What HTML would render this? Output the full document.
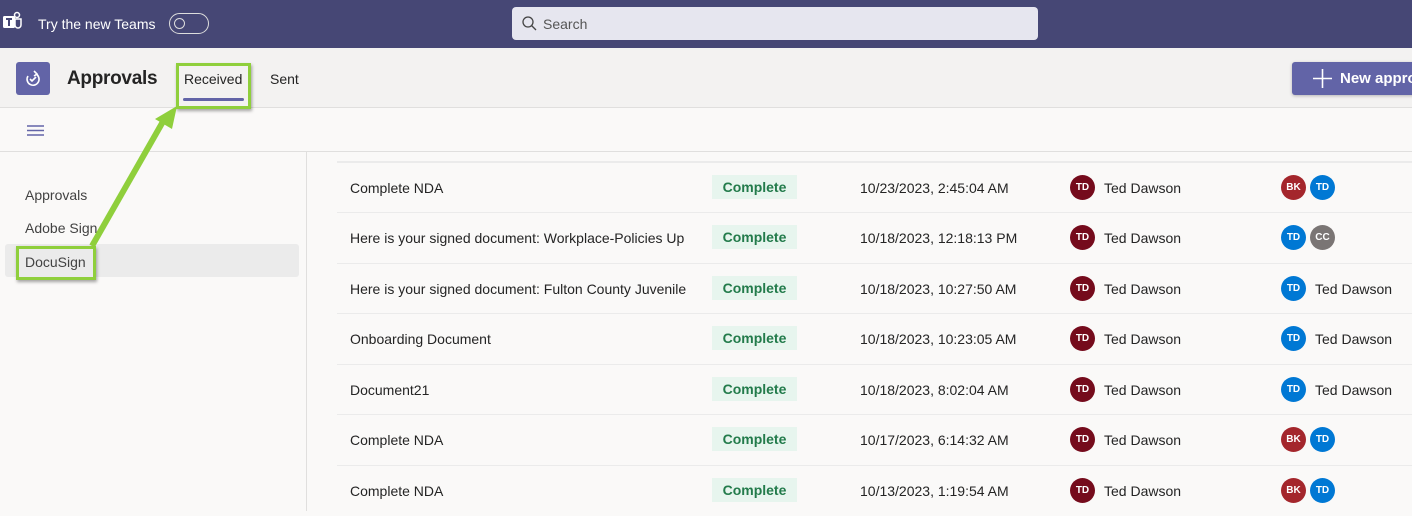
<!DOCTYPE html>
<html><head><meta charset="utf-8"><style>
*{margin:0;padding:0;box-sizing:border-box}
body{width:1412px;height:511px;overflow:hidden;background:#faf9f8;font-family:"Liberation Sans",sans-serif;color:#242424;position:relative}
.top{position:absolute;left:0;top:0;width:1412px;height:48px;background:#464775}
.top .t{position:absolute;left:38px;top:16px;color:#fff;font-size:14px}
.tog{position:absolute;left:169px;top:13px;width:40px;height:21px;border:1.5px solid #ddd;border-radius:11px}
.tog i{position:absolute;left:4px;top:3.5px;width:11px;height:11px;border:1.5px solid #ddd;border-radius:50%}
.search{position:absolute;left:512px;top:7px;width:526px;height:33px;background:#e6e6ef;border-radius:4px;color:#555;font-size:14px;padding:9px 0 0 31px}
.hdr{position:absolute;left:0;top:48px;width:1412px;height:60px;background:#f3f2f1;border-bottom:1px solid #e0dfde}
.appic{position:absolute;left:16px;top:62px;width:34px;height:33px;background:#6264a7;border-radius:3px}
.title{position:absolute;left:67px;top:68px;font-size:19px;font-weight:bold;letter-spacing:-0.3px}
.tab{position:absolute;top:71px;font-size:14px}
.ul{position:absolute;left:183px;top:98px;width:61px;height:3px;background:#6264a7;border-radius:2px}
.btn{position:absolute;left:1292px;top:62px;width:130px;height:33px;background:#6264a7;border-radius:3px;color:#fff;font-weight:bold;font-size:15px;padding:8px 0 0 48px;box-shadow:0 1px 3px rgba(0,0,0,.25);white-space:nowrap;overflow:hidden}
.tool{position:absolute;left:0;top:108px;width:1412px;height:44px;border-bottom:1px solid #e0dfde}
.side{position:absolute;left:0;top:152px;width:307px;height:359px;border-right:1px solid #e0dfde}
.si{position:absolute;left:25px;font-size:14px;color:#424242}
.sel{position:absolute;left:5px;top:244px;width:294px;height:33px;background:#ebebeb;border-radius:3px}
.row{position:absolute;left:337px;width:1075px;height:51px;border-top:1px solid #ebebeb;font-size:14px}
.row span{position:absolute;top:17px;white-space:nowrap}
.badge{position:absolute;left:375px;top:12px;width:85px;height:24px;background:#e7f5ee;color:#237b4b;font-weight:bold;text-align:center;font-size:14px;line-height:24px}
.av{position:absolute;top:12px;width:25px;height:25px;border-radius:50%;color:#fff;font-size:10px;font-weight:bold;text-align:center;line-height:25px}
.gb{position:absolute;border:3px solid #8fcf3c;box-shadow:1px 2px 3px rgba(0,0,0,.35)}
</style></head><body>
<div class="top">
<svg style="position:absolute;left:2px;top:11px" width="22" height="22" viewBox="0 0 22 22"><circle cx="15" cy="4" r="2.5" fill="none" stroke="#fff" stroke-width="1.5"/><path d="M13 8h6v6a3 3 0 0 1-6 0z" fill="none" stroke="#fff" stroke-width="1.5"/><rect x="1" y="5" width="12" height="12" rx="1.5" fill="#fff"/><path d="M4 8h6M7 8v7" stroke="#464775" stroke-width="2"/></svg>
<div class="t">Try the new Teams</div>
<div class="tog"><i></i></div>
<div class="search"><svg style="position:absolute;left:10px;top:9px" width="15" height="15" viewBox="0 0 15 15"><circle cx="6" cy="6" r="5" fill="none" stroke="#444" stroke-width="1.3"/><path d="M9.5 9.5l4.5 4.5" stroke="#444" stroke-width="1.3"/></svg>Search</div>
</div>
<div class="hdr"></div>
<div class="appic"><svg width="34" height="33" viewBox="0 0 34 33"><path d="M12 14a6 6 0 1 0 8-2" fill="none" stroke="#fff" stroke-width="1.6"/><path d="M18 9l3 3-3 2" fill="none" stroke="#fff" stroke-width="1.6"/><path d="M14 17l2 2 4-4" fill="none" stroke="#fff" stroke-width="1.6"/></svg></div>
<div class="title">Approvals</div>
<div class="tab" style="left:184px">Received</div>
<div class="ul"></div>
<div class="tab" style="left:270px">Sent</div>
<div class="btn"><svg style="position:absolute;left:21px;top:7px" width="19" height="19" viewBox="0 0 19 19"><path d="M9.5 0v19M0 9.5h19" stroke="#fff" stroke-width="1.6"/></svg>New approval</div>
<div class="tool"><svg style="position:absolute;left:27px;top:17px" width="17" height="11" viewBox="0 0 17 11"><path d="M0 1h17M0 5.5h17M0 10h17" stroke="#6264a7" stroke-width="1.4"/></svg></div>
<div class="side"></div>
<div class="sel"></div>
<div class="si" style="top:187px">Approvals</div>
<div class="si" style="top:220px">Adobe Sign</div>
<div class="si" style="top:254px">DocuSign</div>

<div class="row" style="top:161px;height:1px"></div>
<div class="row" style="top:162px"><span style="left:13px">Complete NDA</span><div class="badge">Complete</div><span style="left:523px">10/23/2023, 2:45:04 AM</span><div class="av" style="left:733px;background:#750b1c">TD</div><span style="left:767px">Ted Dawson</span><div class="av" style="left:944px;background:#a4262c">BK</div><div class="av" style="left:973px;background:#0078d4">TD</div></div>
<div class="row" style="top:212px"><span style="left:13px;width:349px;overflow:hidden">Here is your signed document: Workplace-Policies Up</span><div class="badge">Complete</div><span style="left:523px">10/18/2023, 12:18:13 PM</span><div class="av" style="left:733px;background:#750b1c">TD</div><span style="left:767px">Ted Dawson</span><div class="av" style="left:944px;background:#0078d4">TD</div><div class="av" style="left:973px;background:#7a7574">CC</div></div>
<div class="row" style="top:263px"><span style="left:13px;width:349px;overflow:hidden">Here is your signed document: Fulton County Juvenile</span><div class="badge">Complete</div><span style="left:523px">10/18/2023, 10:27:50 AM</span><div class="av" style="left:733px;background:#750b1c">TD</div><span style="left:767px">Ted Dawson</span><div class="av" style="left:944px;background:#0078d4">TD</div><span style="left:978px">Ted Dawson</span></div>
<div class="row" style="top:313px"><span style="left:13px">Onboarding Document</span><div class="badge">Complete</div><span style="left:523px">10/18/2023, 10:23:05 AM</span><div class="av" style="left:733px;background:#750b1c">TD</div><span style="left:767px">Ted Dawson</span><div class="av" style="left:944px;background:#0078d4">TD</div><span style="left:978px">Ted Dawson</span></div>
<div class="row" style="top:364px"><span style="left:13px">Document21</span><div class="badge">Complete</div><span style="left:523px">10/18/2023, 8:02:04 AM</span><div class="av" style="left:733px;background:#750b1c">TD</div><span style="left:767px">Ted Dawson</span><div class="av" style="left:944px;background:#0078d4">TD</div><span style="left:978px">Ted Dawson</span></div>
<div class="row" style="top:414px"><span style="left:13px">Complete NDA</span><div class="badge">Complete</div><span style="left:523px">10/17/2023, 6:14:32 AM</span><div class="av" style="left:733px;background:#750b1c">TD</div><span style="left:767px">Ted Dawson</span><div class="av" style="left:944px;background:#a4262c">BK</div><div class="av" style="left:973px;background:#0078d4">TD</div></div>
<div class="row" style="top:465px"><span style="left:13px">Complete NDA</span><div class="badge">Complete</div><span style="left:523px">10/13/2023, 1:19:54 AM</span><div class="av" style="left:733px;background:#750b1c">TD</div><span style="left:767px">Ted Dawson</span><div class="av" style="left:944px;background:#a4262c">BK</div><div class="av" style="left:973px;background:#0078d4">TD</div></div>

<div class="gb" style="left:176px;top:63px;width:75px;height:46px"></div>
<div class="gb" style="left:16px;top:246px;width:80px;height:34px"></div>
<svg style="position:absolute;left:0;top:0" width="300" height="300"><path d="M92 246L165 118" stroke="#8fcf3c" stroke-width="6" fill="none"/><path d="M177 106L155 119L172 129Z" fill="#8fcf3c"/></svg>
</body></html>
